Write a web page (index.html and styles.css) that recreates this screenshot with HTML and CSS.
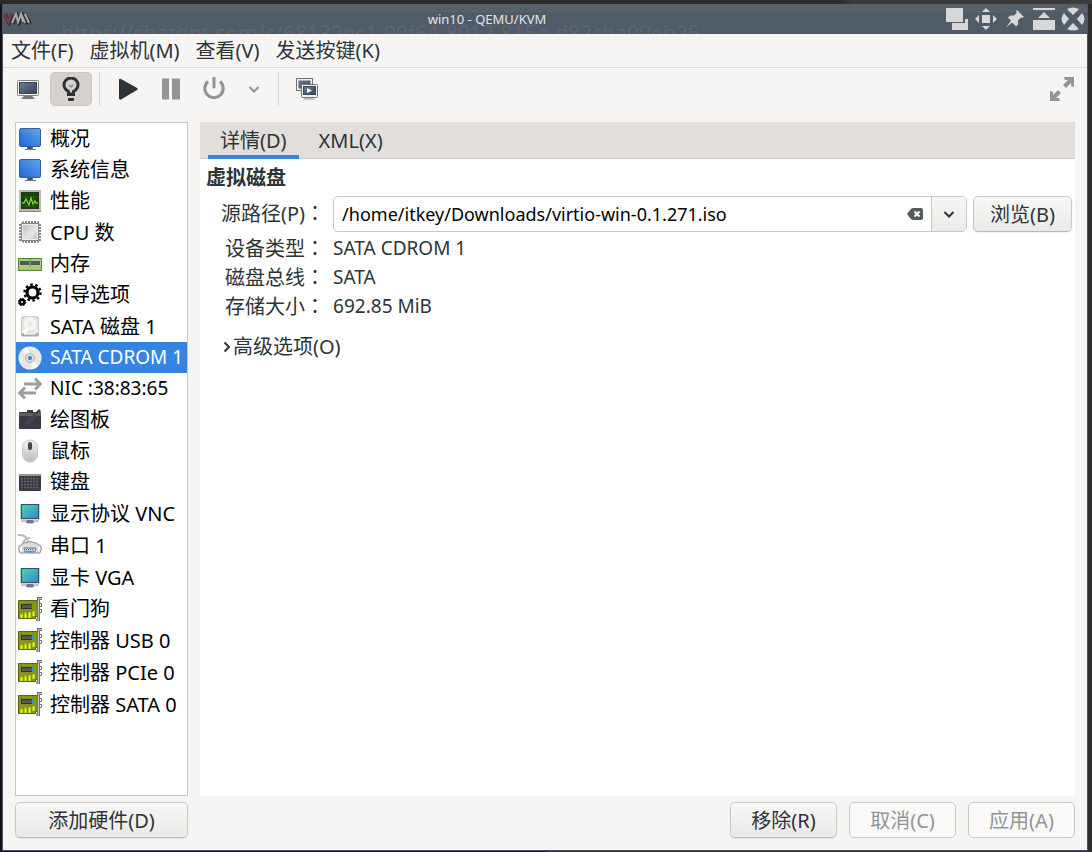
FILE: index.html
```html
<!DOCTYPE html>
<html lang="zh-CN">
<head>
  <meta charset="UTF-8">
  <meta name="viewport" content="width=device-width, initial-scale=1.0">
  <title>win10 - QEMU/KVM</title>
  <link rel="stylesheet" href="styles.css">
</head>
<body>
  <!-- shared icons -->
  <svg class="defs" aria-hidden="true">
    <defs>
      <linearGradient id="blue" x1="0" y1="1" x2="1" y2="0"><stop offset="0" stop-color="#1767d8"/><stop offset="1" stop-color="#66a5f0"/></linearGradient>
      <linearGradient id="teal" x1="0" y1="0" x2="1" y2="1"><stop offset="0" stop-color="#45dcae"/><stop offset="1" stop-color="#3f7fd0"/></linearGradient>
      <linearGradient id="slate" x1="0" y1="0" x2="1" y2="1"><stop offset="0" stop-color="#6b7c95"/><stop offset="1" stop-color="#33435c"/></linearGradient>
      <linearGradient id="metal" x1="0" y1="0" x2="1" y2="1"><stop offset="0" stop-color="#b8b8b6"/><stop offset="0.6" stop-color="#e6e6e4"/><stop offset="1" stop-color="#b5b5b3"/></linearGradient>
      <linearGradient id="mouse" x1="0" y1="0" x2="0" y2="1"><stop offset="0" stop-color="#f4f4f2"/><stop offset="1" stop-color="#bdbcb8"/></linearGradient>
    </defs>
    <symbol id="i-computer" viewBox="0 0 24 24">
      <path d="M9 19h6v3h3v1H7v-1h2z" fill="#77767b"/><path d="M9 19h6l-2 3h-2z" fill="#4c4c50"/>
      <rect x="1.500" y="1.500" width="21" height="18" rx="1.500" fill="url(#blue)" stroke="#3f5c8c"/>
    </symbol>
    <symbol id="i-perf" viewBox="0 0 24 24">
      <rect x="2" y="2" width="20" height="19" fill="#1d3a0b" stroke="#b9b9b6" stroke-width="2"/>
      <path d="M1 22.500h22" stroke="#888"/><path d="M3 8h18M3 17h18M8 4v16M16 4v16" stroke="#2c5811"/>
      <path d="M4 14h2l2-4 3 6 2-7 2 6 2-3 1 2h2" fill="none" stroke="#73d92b" stroke-width="1.300"/>
    </symbol>
    <symbol id="i-cpu" viewBox="0 0 24 24">
      <path d="M5 1.500v21M8 1v22M11 1v22M14 1v22M17 1v22M20 1.500v21M1 5h22M1 8h22M1 11h22M1 14h22M1 17h22M1 20h22" stroke="#66666a" stroke-width="1.600"/>
      <rect x="3.500" y="3.500" width="17" height="17" fill="url(#metal)" stroke="#858585"/>
      <rect x="4.500" y="4.500" width="15" height="15" fill="none" stroke="#eee"/>
    </symbol>
    <symbol id="i-ram" viewBox="0 0 24 24">
      <rect x="0.500" y="6.500" width="23" height="12" fill="#a7cf91" stroke="#4f8a39"/>
      <path d="M2 9h9.500v4H2zM12.500 9H22v4h-9.500z" fill="#555753"/><path d="M12 7v8" stroke="#4d9e32"/>
      <path d="M1 16.500h22" stroke="#d7b73b" stroke-width="3" stroke-dasharray="1.500 0.500"/>
    </symbol>
    <symbol id="i-gears" viewBox="0 0 24 24" fill="none" stroke="#000">
      <circle cx="14.500" cy="9.500" r="5.500" stroke-width="3.200"/>
      <circle cx="14.500" cy="9.500" r="8" stroke-width="2.400" stroke-dasharray="2.500 2.526"/>
      <circle cx="4" cy="19" r="2.300" stroke-width="2.600"/><circle cx="4" cy="19" r="3.800" stroke-width="1" stroke-dasharray="1.500 1.480"/>
    </symbol>
    <symbol id="i-disk" viewBox="0 0 24 24">
      <path d="M5 2.500h14q1 0 1.500 2V20q0 2-1.500 2H5q-1.500 0-1.500-2V4.500q.5-2 1.500-2z" fill="#ecebe8" stroke="#cfcdc8"/>
      <circle cx="12" cy="10" r="7.500" fill="#f5f4f1" stroke="#dbd9d4"/><circle cx="12" cy="10" r="2" fill="#e5e3de"/>
      <path d="M6 19l3-4" stroke="#fff" stroke-width="3"/><path d="M3.500 21.500h17" stroke="#a8a6a1" stroke-width="1.500"/>
      <path d="M4 20h2M18 20h2M4.500 4h1M18.500 4h1" stroke="#777"/>
    </symbol>
    <symbol id="i-cd" viewBox="0 0 24 24">
      <circle cx="12" cy="12" r="11.500" fill="#e9e8e7"/><path d="M12 12L4 4A11.500 11.500 0 0 1 9 1zM12 12l8 8a11.500 11.500 0 0 1-5 3z" fill="#fff"/>
      <circle cx="12" cy="12" r="4.500" fill="#dedddb" stroke="#b3b1ad"/><circle cx="12" cy="12" r="2" fill="#3584e4"/>
    </symbol>
    <symbol id="i-nic" viewBox="0 0 24 24" fill="none" stroke="#9d9d9b" stroke-width="3">
      <path d="M6 7h16M17 1.500L22.500 7 17 12.500M18 16H2M7 10.500L1.500 16 7 21.500"/>
    </symbol>
    <symbol id="i-tablet" viewBox="0 0 24 24">
      <path d="M9 2h6v3H9z" fill="#3d3846"/><rect x="1" y="4" width="22" height="17" rx="1" fill="#3d3846"/><path d="M1 5h22v3H1z" fill="#5e5c64"/>
      <path d="M8 16L22 2" stroke="#5e5c64" stroke-width="3"/><path d="M8 16L22 2" stroke="#3d3846" stroke-width="1.500"/>
    </symbol>
    <symbol id="i-mouse" viewBox="0 0 24 24">
      <rect x="4.500" y="1" width="15" height="22" rx="7.500" fill="url(#mouse)" stroke="#c6c5c1"/><rect x="10" y="3" width="4" height="8" rx="2" fill="#3d3846"/><path d="M12 4v6" stroke="#68666d"/>
    </symbol>
    <symbol id="i-keyboard" viewBox="0 0 24 24">
      <rect x="1" y="4" width="22" height="17" rx="1" fill="#3d3846"/><path d="M1 5h22" stroke="#9a9996" stroke-width="2"/>
      <path d="M3 8.500h18M3 11.500h18M3 14.500h18M3 17.500h18" stroke="#66646b" stroke-width="1.500" stroke-dasharray="2 1"/>
    </symbol>
    <symbol id="i-display" viewBox="0 0 24 24">
      <path d="M3 19h18v2h-4l-2 1v1H9v-1l-2-1H3z" fill="#c5c4c0"/><path d="M9 19h6l1 3H8z" fill="#77767b"/>
      <rect x="3.500" y="3.500" width="17" height="14" fill="url(#teal)" stroke="#2d5175"/><path d="M2.500 3v15.500h19V3" fill="none" stroke="#d4d3d0"/>
    </symbol>
    <symbol id="i-serial" viewBox="0 0 24 24">
      <path d="M0 2q9-1 10 7M5 11q1-6 7-6" fill="none" stroke="#bab9b6" stroke-width="2"/>
      <path d="M6 10q6-3 12 0l5 3q1 4-1 7H2q-2-4-1-7z" fill="#dedddb" stroke="#92918e"/>
      <path d="M6 15h12l-1 4H7z" fill="#bdd6ef" stroke="#6b7e93"/><path d="M8 16.500h8M8.500 18.500h7" stroke="#3570b0" stroke-dasharray="1 1"/><path d="M3 14v4M21 14v4" stroke="#fff" stroke-width="2"/>
    </symbol>
    <symbol id="i-card" viewBox="0 0 24 24">
      <path d="M.5 3.500h19v16h-2v2h-17z" fill="#86921a" stroke="#596312"/>
      <path d="M3.500 21v-5M7.500 21v-6M11.500 21v-6M15.500 19v-5" stroke="#e8fb25" stroke-width="2"/>
      <path d="M2 17l14-3" stroke="#86921a"/>
      <rect x="3.500" y="7.500" width="10" height="4" fill="#555753" stroke="#2f332f"/><path d="M13 8.500h3M13 10.500h3" stroke="#4a8ad6"/>
      <path d="M24 1.500h-3.500V23H18" fill="none" stroke="#70706e" stroke-width="3"/><path d="M24 1.500h-3.500V23H18" fill="none" stroke="#c5c5c3"/>
      <path d="M22 6.500h1.500v3H22M22 12.500h1.500v3H22" fill="none" stroke="#777"/>
    </symbol>
    <symbol id="i-chevron" viewBox="0 0 12 12"><path d="M1.500 4L6 8.500 10.500 4" fill="none" stroke="currentColor" stroke-width="2"/></symbol>
  </svg>

  <div class="window">
    <header class="titlebar">
      <span class="ghost" aria-hidden="true">https://chatgpt.com/c/68132ec1-90f64-8012-815e-d82cba09eb25</span>
      <svg class="logo" viewBox="0 0 29 14">
        <path d="M2 2l4 9 3-9M10 12l4-9 2 8 3-8 2 8M19 3l5 9M22 3l5 9" fill="none" stroke="#303236" stroke-width="4"/>
        <path d="M1.500 1.500l4 9 3-9" fill="none" stroke="#8f3550" stroke-width="2"/>
        <path d="M9 11l4-9 2 8 3-8 2 8M18 2l4 9M22 2l4 9" fill="none" stroke="#a9aaa9" stroke-width="2"/>
      </svg>
      <h1 class="title">win10 - QEMU/KVM</h1>
      <div class="title-buttons">
        <button aria-label="桌面"><svg viewBox="0 0 24 24"><path d="M1 1h17v14H1z"/><path d="M20 12h3v11H7v-7h13z"/></svg></button>
        <button aria-label="移动"><svg viewBox="0 0 24 24"><path d="M8 8h8v8H8zM12 1l4 4H8zM12 23l4-4H8zM1 12l4-4v8zM23 12l-4-4v8z"/></svg></button>
        <button aria-label="置顶"><svg viewBox="0 0 24 24"><path d="M14 3l7 7-2 1-1-.5-3 3v4l-2 2-4-4-6 5 5-7-3-3 2-2h4l3-3-1-1z"/></svg></button>
        <button aria-label="卷起"><svg viewBox="0 0 24 24"><path d="M1 1h22v2H1zM12 5l6 6H6zM1 13h22v10H1z"/></svg></button>
        <button aria-label="关闭"><svg viewBox="0 0 24 24"><path d="M12 8L6 2q6-3 12 0zM12 16l6 6q-6 3-12 0zM8 12l-5 6q-5-6 0-12zM16 12l5-6q5 6 0 12z"/></svg></button>
      </div>
    </header>

    <nav class="menubar">
      <button>文件(F)</button>
      <button>虚拟机(M)</button>
      <button>查看(V)</button>
      <button>发送按键(K)</button>
    </nav>

    <div class="toolbar">
      <button class="tool" aria-label="控制台">
        <svg viewBox="0 0 24 24"><path d="M8 19h8l3 3H5z" fill="#77767b"/><rect x="1.500" y="3.500" width="21" height="15" rx="1" fill="#f2f2f0" stroke="#82817e"/><rect x="3.500" y="5.500" width="17" height="11" fill="url(#slate)" stroke="#3b4758"/></svg>
      </button>
      <button class="tool active" aria-label="详情">
        <svg viewBox="0 0 24 24"><path d="M9.500 17v-2.500Q5 12 5 8a7 7 0 0 1 14 0q0 4-4.500 6.500V17z" fill="none" stroke="#2e3436" stroke-width="3"/><path d="M8 16h8v3H8zM9 21h6v2l-1 1h-4l-1-1z" fill="#2e3436"/><path d="M10 8l2 2 2-2" fill="none" stroke="#8b8b8a" stroke-width="1.500"/></svg>
      </button>
      <span class="sep"></span>
      <button class="tool" aria-label="运行"><svg viewBox="0 0 24 24"><path d="M3 3q0-2 2-1l16 9q1.500 1 0 2L5 22.500q-2 .5-2-1z" fill="#2e3436"/></svg></button>
      <button class="tool dim" aria-label="暂停"><svg viewBox="0 0 24 24"><path d="M3 2.500Q3 1.500 4 1.500h6v21H4q-1 0-1-1zM13 1.500h7q1 0 1 1v19q0 1-1 1h-7z" fill="currentColor"/></svg></button>
      <button class="tool dim" aria-label="关机"><svg viewBox="0 0 24 24" fill="none" stroke="currentColor" stroke-width="3"><path d="M6 4.500a9.200 9.200 0 1 0 12 0" /><path d="M12 1v9" stroke-linecap="round"/></svg></button>
      <button class="tool narrow dim" aria-label="关机选项"><svg class="small"><use href="#i-chevron"/></svg></button>
      <span class="sep"></span>
      <button class="tool" aria-label="快照">
        <svg viewBox="0 0 24 24"><rect x="1.500" y="1.500" width="16" height="12" fill="#eee" stroke="#73726f"/><rect x="3.500" y="3.500" width="12" height="8" fill="url(#slate)"/><path d="M10 20h8l2 3H8z" fill="#c0bfbc"/><rect x="6.500" y="7.500" width="16" height="13" rx="1" fill="#f4f4f2" stroke="#73726f"/><rect x="8.500" y="9.500" width="12" height="8" fill="url(#slate)" stroke="#3b4758"/><path d="M12 11l5 2.500-5 2.500z" fill="#fff"/></svg>
      </button>
      <button class="tool dim push" aria-label="全屏"><svg viewBox="0 0 24 24"><path d="M14 0h10v10l-3-1V6l-5 5-3-3 5-5h-3zM10 24H0V14l3 1v3l5-5 3 3-5 5h3z" fill="currentColor"/></svg></button>
    </div>

    <main class="content">
      <ul class="hardware">
        <li><button><svg><use href="#i-computer"/></svg>概况</button></li>
        <li><button><svg><use href="#i-computer"/></svg>系统信息</button></li>
        <li><button><svg><use href="#i-perf"/></svg>性能</button></li>
        <li><button class="mixed"><svg><use href="#i-cpu"/></svg>CPU 数</button></li>
        <li><button><svg><use href="#i-ram"/></svg>内存</button></li>
        <li><button><svg><use href="#i-gears"/></svg>引导选项</button></li>
        <li><button class="mixed"><svg><use href="#i-disk"/></svg>SATA 磁盘 1</button></li>
        <li><button class="latin selected"><svg><use href="#i-cd"/></svg>SATA CDROM 1</button></li>
        <li><button class="latin"><svg><use href="#i-nic"/></svg>NIC :38:83:65</button></li>
        <li><button><svg><use href="#i-tablet"/></svg>绘图板</button></li>
        <li><button><svg><use href="#i-mouse"/></svg>鼠标</button></li>
        <li><button><svg><use href="#i-keyboard"/></svg>键盘</button></li>
        <li><button class="mixed"><svg><use href="#i-display"/></svg>显示协议 VNC</button></li>
        <li><button class="mixed"><svg><use href="#i-serial"/></svg>串口 1</button></li>
        <li><button class="mixed"><svg><use href="#i-display"/></svg>显卡 VGA</button></li>
        <li><button><svg><use href="#i-card"/></svg>看门狗</button></li>
        <li><button class="mixed"><svg><use href="#i-card"/></svg>控制器 USB 0</button></li>
        <li><button class="mixed"><svg><use href="#i-card"/></svg>控制器 PCIe 0</button></li>
        <li><button class="mixed"><svg><use href="#i-card"/></svg>控制器 SATA 0</button></li>
      </ul>

      <section class="details">
        <div class="tabs" role="tablist">
          <button class="tab current" role="tab" aria-selected="true">详情(D)</button>
          <button class="tab" role="tab" aria-selected="false">XML(X)</button>
        </div>
        <h2>虚拟磁盘</h2>
        <div class="form">
          <label class="name" for="source">源路径(P)<span class="colon" lang="zh-TW">：</span></label>
          <div class="source-row">
            <div class="entry">
              <input type="text" id="source" value="/home/itkey/Downloads/virtio-win-0.1.271.iso">
              <button class="clear" aria-label="清除"><svg viewBox="0 0 16 12"><path d="M6 0h8q2 0 2 2v8q0 2-2 2H6q-1.500 0-3-2L0 6l3-4q1.500-2 3-2z" fill="#555b5d"/><path d="M7.500 3.500l5 5M12.500 3.500l-5 5" stroke="#fff" stroke-width="2"/></svg></button>
              <button class="drop" aria-label="选择路径"><svg class="small"><use href="#i-chevron"/></svg></button>
            </div>
            <button class="btn">浏览(B)</button>
          </div>
          <span class="name">设备类型<span class="colon" lang="zh-TW">：</span></span><span class="latin">SATA CDROM 1</span>
          <span class="name">磁盘总线<span class="colon" lang="zh-TW">：</span></span><span class="latin">SATA</span>
          <span class="name">存储大小<span class="colon" lang="zh-TW">：</span></span><span class="latin">692.85 MiB</span>
        </div>
        <button class="advanced"><svg viewBox="0 0 12 12"><path d="M3.500 1.500L8 6l-4.500 4.500" fill="none" stroke="currentColor" stroke-width="2"/></svg>高级选项(O)</button>
      </section>
    </main>

    <footer class="actions">
      <button class="btn add">添加硬件(D)</button>
      <button class="btn push">移除(R)</button>
      <button class="btn" disabled>取消(C)</button>
      <button class="btn" disabled>应用(A)</button>
    </footer>
  </div>
</body>
</html>
```
FILE: styles.css
```css
* {
  box-sizing: border-box;
}
body {
  margin: 0;
  min-height: 100vh;
  padding: 4px 4px 1px 2px;
  display: flex;
  background:
    linear-gradient(90deg, #2b2b2b 77%, #3c3c3c 78%) top / 100% 4px no-repeat,
    linear-gradient(90deg, #121419 50%, #2b2c2d 50%);
  color: #2e3436;
  font: 20px/29px "Noto Sans", "Noto Sans CJK SC", sans-serif;
}
button, input {
  margin: 0;
  padding: 0;
  border: none;
  background: none;
  color: inherit;
  font: inherit;
}
ul, h1, h2 {
  margin: 0;
  padding: 0;
}
svg {
  display: block;
  flex: none;
  width: 24px;
  height: 24px;
}
svg.defs {
  position: absolute;
  width: 0;
  height: 0;
}
svg.small {
  width: 12px;
  height: 12px;
}
.push {
  margin-left: auto;
}
.latin {
  font-size: 19px;
}
.window {
  flex: 1;
  min-width: 0;
  display: flex;
  flex-direction: column;
  background: #f6f5f4;
  border: 1px solid #4a5462;
  border-top: none;
}

/* title bar */
.titlebar {
  position: relative;
  display: flex;
  align-items: center;
  height: 30px;
  overflow: hidden;
  background: linear-gradient(#55606b 7px, #59636e 7px, #59636e 8px, #505b67 8px);
}
.ghost {
  position: absolute;
  left: 58px;
  top: 16px;
  color: #5c6670;
  font-size: 21px;
  line-height: 26px;
  white-space: nowrap;
}
.logo {
  width: 29px;
  height: 14px;
  z-index: 1;
}
.title {
  flex: 1;
  z-index: 1;
  text-align: center;
  color: #e4e6e8;
  font-size: 13px;
  font-weight: 400;
  line-height: 30px;
}
.title-buttons {
  display: flex;
}
.title-buttons button {
  width: 29px;
  display: flex;
  justify-content: center;
}
.title-buttons svg {
  fill: #d8d8d8;
}

/* menu and toolbar */
.menubar {
  display: flex;
  border-bottom: 1px solid #dddbd8;
}
.menubar button {
  padding: 0 8px;
  line-height: 33px;
}
.toolbar {
  display: flex;
  gap: 1px;
  padding: 4px;
}
.tool {
  width: 42px;
  height: 34px;
  display: flex;
  align-items: center;
  justify-content: center;
}
.tool.narrow {
  width: 35px;
}
.tool.active {
  background: #d6d1cd;
  border: 1px solid #cdc7c2;
  border-radius: 5px;
}
.tool.dim {
  color: #929595;
}
.sep {
  width: 1px;
  margin: 0 6px;
  background: #d9d7d4;
}

/* content */
.content {
  flex: 1;
  display: flex;
  gap: 12px;
  padding: 12px 12px 6px;
}
.hardware {
  width: 173px;
  flex: none;
  list-style: none;
  background: #fff;
  border: 1px solid #c9c6c2;
  color: #000;
}
.hardware button {
  width: 100%;
  height: 31px;
  padding-left: 2px;
  display: flex;
  align-items: center;
  gap: 8px;
  white-space: nowrap;
}
.hardware .mixed {
  height: 32px;
}
.hardware .selected {
  background: #3584e4;
  color: #fff;
}
.details {
  flex: 1;
  min-width: 0;
  background: #fff;
}
.tabs {
  display: flex;
  gap: 8px;
  height: 37px;
  padding-left: 8px;
  background: #e1dedb;
  border-bottom: 1px solid #cdc7c2;
}
.tab {
  padding: 0 12px;
  height: 36px;
}
.tab.current {
  box-shadow: inset 0 -3px #3584e4, 0 1px #3584e4;
}
h2 {
  padding: 4px 6px;
  font-size: 20px;
  line-height: 29px;
}
.form {
  display: grid;
  grid-template-columns: auto 1fr;
  column-gap: 8px;
  margin: 0 3px 0 21px;
}
.name {
  text-align: right;
  white-space: nowrap;
}
label.name {
  line-height: 36px;
}
.colon {
  font-family: "Noto Sans CJK TC", sans-serif;
  line-height: 20px;
}
.source-row {
  display: flex;
  gap: 6px;
  margin-bottom: 2px;
}
.entry {
  flex: 1;
  display: flex;
  align-items: stretch;
  height: 36px;
  background: #fff;
  border: 1px solid #cdc7c2;
  border-radius: 5px;
  overflow: hidden;
}
.entry input {
  flex: 1;
  min-width: 0;
  padding: 0 8px;
  color: #000;
  font-size: 18px;
  outline: none;
}
.clear {
  padding: 0 8px;
}
.clear svg {
  width: 16px;
  height: 12px;
}
.drop {
  width: 35px;
  display: flex;
  align-items: center;
  justify-content: center;
  border-left: 1px solid #cdc7c2;
  background: linear-gradient(#f6f5f4, #edebe9);
}
.btn {
  height: 36px;
  padding: 0 16px;
  border: 1px solid #cdc7c2;
  border-bottom-color: #bfb8b1;
  border-radius: 5px;
  background: linear-gradient(#f8f7f6, #ebe9e7);
  box-shadow: 0 1px 2px rgba(0, 0, 0, 0.07);
}
.btn:disabled {
  color: #929595;
  background: #faf9f8;
  border-color: #cdc7c2;
  box-shadow: none;
}
.advanced {
  display: flex;
  align-items: center;
  margin: 11px 0 0 21px;
}
.advanced svg {
  width: 12px;
  height: 12px;
}

/* bottom buttons */
.actions {
  display: flex;
  gap: 12px;
  padding: 0 12px 12px;
}
.actions .btn {
  width: 107px;
  padding: 0;
}
.actions .add {
  width: 173px;
}
```
